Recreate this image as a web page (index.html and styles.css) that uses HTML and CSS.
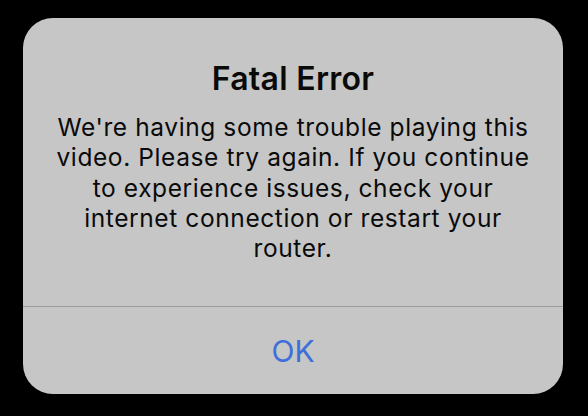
FILE: index.html
```html
<!DOCTYPE html>
<html lang="en">
<head>
    <meta charset="UTF-8">
    <meta name="viewport" content="width=device-width, initial-scale=1.0">
    <title>Fatal Error</title>
    <link rel="stylesheet" href="styles.css">
</head>
<body>
    <div class="alert">
        <div class="alert-content">
            <h1 class="alert-title">Fatal Error</h1>
            <p class="alert-message">We're having some trouble playing this video. Please try again. If you continue to experience issues, check your internet connection or restart your router.</p>
        </div>
        <div class="alert-actions">
            <button class="alert-button">OK</button>
        </div>
    </div>
</body>
</html>
```

FILE: styles.css
```css
body {
    margin: 0;
    font-family: Inter, "Liberation Sans", sans-serif;
    display: flex;
    justify-content: center;
    align-items: flex-start;
    min-height: 100vh;
    background-color: #000;
}

.alert {
    width: 540px;
    height: 376px;
    margin-top: 18px;
    margin-left: -2px;
    display: flex;
    flex-direction: column;
    background-color: #c6c6c6;
    border-radius: 30px;
    overflow: hidden;
}

.alert-content {
    flex: 1;
    padding: 42px 30px 0;
    text-align: center;
    color: #0a0a0a;
}

.alert-title {
    margin: 0 0 14px;
    font-size: 32px;
    font-weight: 600;
    line-height: 38px;
    letter-spacing: 0.3px;
}

.alert-message {
    margin: 0;
    font-size: 24.5px;
    line-height: 30.3px;
    letter-spacing: 0.6px;
}

.alert-actions {
    height: 87px;
    border-top: 1px solid #9b9b9b;
    display: flex;
}

.alert-button {
    flex: 1;
    border: none;
    background: none;
    color: #3c6fda;
    font-family: inherit;
    font-size: 30px;
    cursor: pointer;
}
```
